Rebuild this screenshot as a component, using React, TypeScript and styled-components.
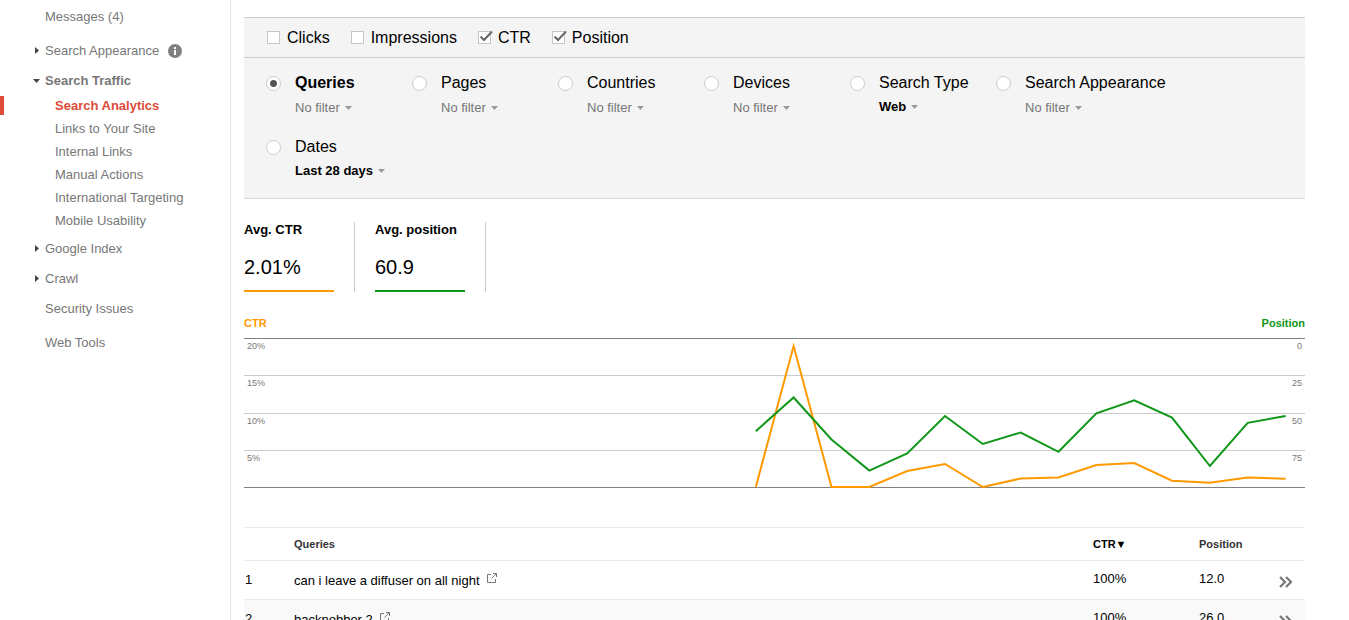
import React from "react";
import styled, { createGlobalStyle, css } from "styled-components";

const GlobalStyle = createGlobalStyle`
  * { box-sizing: border-box; }
  body {
    margin: 0;
    background: #fff;
    color: #000;
    font: 13px/20px "Liberation Sans", Arial, sans-serif;
  }
  button, input { font: inherit; margin: 0; padding: 0; }
  button { border: 0; background: none; color: inherit; cursor: pointer; }
  a { color: inherit; text-decoration: none; }
`;

const Page = styled.div`
  display: flex;
  height: 100vh;
  overflow: hidden;
`;

/* ---------- Sidebar ---------- */

const Sidebar = styled.nav`
  flex: 0 0 231px;
  border-right: 1px solid #e5e5e5;
  padding-top: 2px;
  color: #777;
`;

const NavList = styled.ul`
  list-style: none;
  margin: 0;
  padding: 0;
`;

const NavItem = styled.li<{ $spaced?: boolean }>`
  margin-bottom: ${(p) => (p.$spaced ? 4 : 0)}px;
`;

const NavLink = styled.a<{ $open?: boolean }>`
  display: flex;
  align-items: center;
  height: 30px;
  font-weight: ${(p) => (p.$open ? "bold" : "normal")};
`;

const ArrowSlot = styled.span<{ $open?: boolean }>`
  flex: 0 0 45px;
  display: flex;
  justify-content: flex-end;
  padding-right: ${(p) => (p.$open ? 5 : 6)}px;
`;

const InfoIcon = styled.svg`
  margin-left: 9px;
`;

const SubList = styled(NavList)`
  line-height: 20px;
`;

const SubLink = styled.a<{ $active?: boolean }>`
  display: block;
  position: relative;
  height: 23px;
  padding-left: 55px;
  ${(p) =>
    p.$active &&
    css`
      color: #dd4b39;
      font-weight: bold;
      &::before {
        content: "";
        position: absolute;
        left: 0;
        top: 0;
        width: 4px;
        height: 19px;
        background: #dd4b39;
      }
    `}
`;

/* ---------- Filter panel ---------- */

const Main = styled.main`
  flex: 1;
  min-width: 0;
  padding: 17px 44px 0 13px;
`;

const Panel = styled.form`
  background: #f4f4f4;
  border-top: 1px solid #ccc;
  border-bottom: 1px solid #d9d9d9;
`;

const MetricBar = styled.div`
  display: flex;
  flex-wrap: wrap;
  gap: 0 21px;
  padding: 0 23px;
  border-bottom: 1px solid #ccc;
`;

const MetricLabel = styled.label`
  display: flex;
  align-items: center;
  gap: 7px;
  height: 39px;
  font-size: 16px;
`;

const CheckWrap = styled.span`
  display: grid;
  position: relative;
`;

const CheckInput = styled.input`
  appearance: none;
  width: 13px;
  height: 13px;
  border: 1px solid #c6c6c6;
  background: #fff;
  & + svg { display: none; }
  &:checked + svg { display: block; }
`;

const CheckMark = styled.svg`
  position: absolute;
  left: 1px;
  top: -1px;
  pointer-events: none;
`;

const Dimensions = styled.div`
  display: grid;
  grid-template-columns: repeat(auto-fill, 146px);
  row-gap: 14px;
  padding: 13px 44px 15px 22px;
`;

const Dimension = styled.div<{ $set?: boolean }>`
  display: grid;
  grid-template-columns: 29px max-content;
  grid-template-rows: 24px ${(p) => (p.$set ? 24 : 26)}px;
  align-items: center;
  justify-items: start;
`;

const RadioInput = styled.input`
  appearance: none;
  width: 15px;
  height: 15px;
  border: 1px solid #ccc;
  border-radius: 50%;
  background: #fff;
  &:checked { background: radial-gradient(circle, #555 0 3px, #fff 4px); }
`;

const DimensionLabel = styled.label<{ $selected?: boolean }>`
  font-size: 16px;
  font-weight: ${(p) => (p.$selected ? "bold" : "normal")};
`;

const FilterButton = styled.button<{ $set?: boolean }>`
  grid-column: 2;
  display: flex;
  align-items: center;
  gap: 5px;
  color: ${(p) => (p.$set ? "#000" : "#777")};
  font-weight: ${(p) => (p.$set ? "bold" : "normal")};
`;

/* ---------- Totals and chart ---------- */

const Totals = styled.dl`
  display: flex;
  gap: 20px;
  margin: 23px 0 21px;
`;

const Total = styled.div`
  padding-right: 20px;
  border-right: 1px solid #ccc;
`;

const TotalName = styled.dt`
  line-height: 16px;
  font-weight: bold;
`;

const TotalValue = styled.dd<{ $color: string }>`
  width: 90px;
  margin: 0;
  padding: 17px 0 11px;
  border-bottom: 2px solid ${(p) => p.$color};
  font-size: 20px;
  line-height: 24px;
`;

const ChartTitles = styled.div`
  display: flex;
  justify-content: space-between;
  height: 25px;
  font-size: 11px;
  font-weight: bold;
`;

const SeriesName = styled.span<{ $color: string }>`
  color: ${(p) => p.$color};
`;

const Chart = styled.div`
  display: grid;
  height: 150px;
`;

const ChartGrid = styled.div`
  grid-area: 1 / 1;
  display: flex;
  flex-direction: column;
  border-bottom: 1px solid #808080;
`;

const ChartBand = styled.div`
  flex: 1;
  display: flex;
  justify-content: space-between;
  padding: 1px 3px 0;
  border-top: 1px solid #ccc;
  color: #777;
  font-size: 9px;
  line-height: 12px;
  &:first-child { border-top-color: #808080; }
`;

const ChartLines = styled.svg`
  grid-area: 1 / 1;
  width: 100%;
  height: 150px;
`;

/* ---------- Table ---------- */

const Table = styled.table`
  width: 100%;
  margin-top: 39px;
  table-layout: fixed;
  border-collapse: separate;
  border-spacing: 0;
  border-top: 1px solid #ebebeb;
`;

const HeadCell = styled.th<{ $sorted?: boolean }>`
  height: 33px;
  padding: 0;
  border-bottom: 1px solid #ebebeb;
  text-align: left;
  color: ${(p) => (p.$sorted ? "#000" : "#333")};
  font-size: 11px;
`;

const Row = styled.tr`
  &:nth-child(even) { background: #f9f9f9; }
`;

const Cell = styled.td`
  height: 39px;
  padding: 0 0 2px;
  border-bottom: 1px solid #ebebeb;
`;

const IndexCell = styled(Cell)`
  padding: 0 0 0 1px;
`;

const QueryCell = styled(Cell)`
  padding: 1px 0 0;
`;

const MoreCell = styled(Cell)`
  padding: 3px 0 0;
`;

const ExternalLink = styled.a`
  display: inline-block;
  margin-left: 7px;
  vertical-align: 2px;
  line-height: 10px;
`;

const MoreButton = styled.button`
  display: block;
  & svg { display: block; }
`;

const Caret = () => (
  <svg width="7" height="4" viewBox="0 0 7 4" aria-hidden="true">
    <path d="M0 0h7L3.5 4z" fill="#999" />
  </svg>
);

const TreeArrow = ({ open }: { open?: boolean }) =>
  open ? (
    <svg width="7" height="4" viewBox="0 0 7 4" aria-hidden="true">
      <path d="M0 0h7L3.5 4z" fill="#444" />
    </svg>
  ) : (
    <svg width="4" height="8" viewBox="0 0 4 8" aria-hidden="true">
      <path d="M0 0v7l4-3.5z" fill="#444" />
    </svg>
  );

type NavEntry = {
  label: string;
  tree?: boolean;
  info?: boolean;
  spaced?: boolean;
  children?: string[];
};

const nav: NavEntry[] = [
  { label: "Messages (4)", spaced: true },
  { label: "Search Appearance", tree: true, info: true },
  {
    label: "Search Traffic",
    tree: true,
    children: [
      "Search Analytics",
      "Links to Your Site",
      "Internal Links",
      "Manual Actions",
      "International Targeting",
      "Mobile Usability",
    ],
  },
  { label: "Google Index", tree: true },
  { label: "Crawl", tree: true },
  { label: "Security Issues", spaced: true },
  { label: "Web Tools" },
];

const metrics = [
  { name: "Clicks", on: false },
  { name: "Impressions", on: false },
  { name: "CTR", on: true },
  { name: "Position", on: true },
];

const dimensions: { name: string; filter?: string }[] = [
  { name: "Queries" },
  { name: "Pages" },
  { name: "Countries" },
  { name: "Devices" },
  { name: "Search Type", filter: "Web" },
  { name: "Search Appearance" },
  { name: "Dates", filter: "Last 28 days" },
];

const ORANGE = "#ff9900";
const GREEN = "#109618";

const bands = [
  ["20%", "0"],
  ["15%", "25"],
  ["10%", "50"],
  ["5%", "75"],
];

const ctrY = [149, 8, 149, 149, 133, 126, 149, 140.5, 139.5, 127, 125, 142.7, 144.7, 139.5, 140.7];
const positionY = [93.2, 59.5, 101.5, 132.6, 115.4, 78, 106, 94.5, 113.8, 75.4, 62.3, 79.6, 128, 84.8, 78];
const toPoints = (ys: number[]) =>
  ys.map((y, i) => `${(511.8 + i * 37.84).toFixed(1)},${y}`).join(" ");

const rows = [
  { query: "can i leave a diffuser on all night", ctr: "100%", position: "12.0" },
  { query: "backnobber 2", ctr: "100%", position: "26.0" },
];

export default function App() {
  const [dimension, setDimension] = React.useState("Queries");

  return (
    <Page>
      <GlobalStyle />
      <Sidebar>
        <NavList>
          {nav.map((entry) => (
            <NavItem key={entry.label} $spaced={entry.spaced}>
              <NavLink href="#" $open={!!entry.children}>
                <ArrowSlot $open={!!entry.children}>
                  {entry.tree && <TreeArrow open={!!entry.children} />}
                </ArrowSlot>
                {entry.label}
                {entry.info && (
                  <InfoIcon width="14" height="14" viewBox="0 0 14 14" aria-hidden="true">
                    <circle cx="7" cy="7" r="7" fill="#808080" />
                    <path d="M6 3h2v2H6zM6 6h2v5H6z" fill="#fff" />
                  </InfoIcon>
                )}
              </NavLink>
              {entry.children && (
                <SubList>
                  {entry.children.map((child, i) => (
                    <li key={child}>
                      <SubLink href="#" $active={i === 0}>
                        {child}
                      </SubLink>
                    </li>
                  ))}
                </SubList>
              )}
            </NavItem>
          ))}
        </NavList>
      </Sidebar>

      <Main>
        <Panel>
          <MetricBar>
            {metrics.map((m) => (
              <MetricLabel key={m.name}>
                <CheckWrap>
                  <CheckInput type="checkbox" defaultChecked={m.on} />
                  <CheckMark width="14" height="13" viewBox="0 0 14 13" aria-hidden="true">
                    <path d="M1.5 6.5L5 10L13 1.5" fill="none" stroke="#666" strokeWidth="2" />
                  </CheckMark>
                </CheckWrap>
                {m.name}
              </MetricLabel>
            ))}
          </MetricBar>
          <Dimensions>
            {dimensions.map((d) => {
              const id = d.name.toLowerCase().replace(" ", "-");
              return (
                <Dimension key={d.name} $set={!!d.filter}>
                  <RadioInput
                    type="radio"
                    name="dimension"
                    id={id}
                    checked={dimension === d.name}
                    onChange={() => setDimension(d.name)}
                  />
                  <DimensionLabel htmlFor={id} $selected={dimension === d.name}>
                    {d.name}
                  </DimensionLabel>
                  <FilterButton type="button" $set={!!d.filter}>
                    {d.filter ?? "No filter"}
                    <Caret />
                  </FilterButton>
                </Dimension>
              );
            })}
          </Dimensions>
        </Panel>

        <Totals>
          <Total>
            <TotalName>Avg. CTR</TotalName>
            <TotalValue $color={ORANGE}>2.01%</TotalValue>
          </Total>
          <Total>
            <TotalName>Avg. position</TotalName>
            <TotalValue $color={GREEN}>60.9</TotalValue>
          </Total>
        </Totals>

        <ChartTitles>
          <SeriesName $color={ORANGE}>CTR</SeriesName>
          <SeriesName $color={GREEN}>Position</SeriesName>
        </ChartTitles>
        <Chart>
          <ChartGrid>
            {bands.map(([left, right]) => (
              <ChartBand key={left}>
                <span>{left}</span>
                <span>{right}</span>
              </ChartBand>
            ))}
          </ChartGrid>
          <ChartLines viewBox="0 0 1061 150" preserveAspectRatio="none" aria-hidden="true">
            <g fill="none" strokeWidth="2">
              <polyline points={toPoints(ctrY)} stroke={ORANGE} vectorEffect="non-scaling-stroke" />
              <polyline points={toPoints(positionY)} stroke={GREEN} vectorEffect="non-scaling-stroke" />
            </g>
          </ChartLines>
        </Chart>

        <Table>
          <colgroup>
            <col style={{ width: 50 }} />
            <col />
            <col style={{ width: 106 }} />
            <col style={{ width: 79 }} />
            <col style={{ width: 27 }} />
          </colgroup>
          <thead>
            <tr>
              <HeadCell />
              <HeadCell scope="col">Queries</HeadCell>
              <HeadCell scope="col" $sorted>
                CTR▼
              </HeadCell>
              <HeadCell scope="col">Position</HeadCell>
              <HeadCell />
            </tr>
          </thead>
          <tbody>
            {rows.map((r, i) => (
              <Row key={r.query}>
                <IndexCell>{i + 1}</IndexCell>
                <QueryCell>
                  {r.query}
                  <ExternalLink href="#" aria-label={`Open ${r.query}`}>
                    <svg width="10" height="10" viewBox="0 0 10 10" aria-hidden="true">
                      <path
                        d="M4 1.5H.5v8h8V6M6 .5h3.5V4M9.5.5L4.5 5.5"
                        fill="none"
                        stroke="#777"
                      />
                    </svg>
                  </ExternalLink>
                </QueryCell>
                <Cell>{r.ctr}</Cell>
                <Cell>{r.position}</Cell>
                <MoreCell>
                  <MoreButton type="button" aria-label={`Details for ${r.query}`}>
                    <svg width="15" height="12" viewBox="0 0 15 12" aria-hidden="true">
                      <path
                        d="M2 1l5 5-5 5M8 1l5 5-5 5"
                        fill="none"
                        stroke="#777"
                        strokeWidth="2.2"
                      />
                    </svg>
                  </MoreButton>
                </MoreCell>
              </Row>
            ))}
          </tbody>
        </Table>
      </Main>
    </Page>
  );
}
